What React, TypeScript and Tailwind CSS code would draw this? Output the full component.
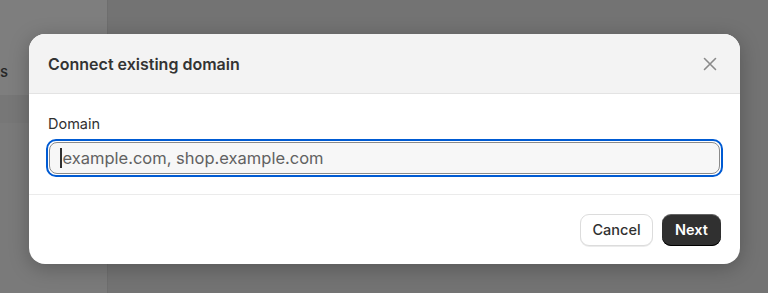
import React from 'react';

const App: React.FC = () => {
  return (
    <div
      className="relative h-[293px] w-full overflow-hidden bg-[#737373]"
      style={{ fontFamily: 'Inter, "Liberation Sans", sans-serif' }}
    >
      {/* Dimmed page behind */}
      <div className="flex h-full">
        <div className="flex w-[108px] flex-col border-r border-[#6e6e6e] bg-[#7e7e7e]">
          <div className="h-[95px] pt-[62px]">
            <div className="flex w-[8px] justify-end overflow-hidden text-[15px] font-medium leading-[20px] text-[#262626]">
              <span className="whitespace-nowrap">Domain s</span>
            </div>
          </div>
          <div className="h-[28px] bg-[#777777]" />
          <div className="flex-1 bg-[#7a7a7a]" />
        </div>
        <div className="flex-1 bg-[#737373]" />
      </div>

      {/* Modal */}
      <div className="absolute left-[29px] top-[34px] w-[711px] overflow-hidden rounded-[16px] bg-white shadow-[0_4px_20px_rgba(0,0,0,0.25)]">
        <div className="flex h-[60px] items-center justify-between border-b border-[#e3e3e3] bg-[#f3f3f3] pl-[19px] pr-[22px]">
          <h2 className="text-[16px] font-semibold text-[#333333]">Connect existing domain</h2>
          <button className="flex h-[16px] w-[16px] items-center justify-center text-[#8a8a8a]">
            <svg width="14" height="14" viewBox="0 0 14 14" fill="none" stroke="currentColor" strokeWidth="1.6" strokeLinecap="round">
              <path d="M1.5 1.5l11 11M12.5 1.5l-11 11" />
            </svg>
          </button>
        </div>

        <div className="border-b border-[#ebebeb] px-[19px] pb-[17px] pt-[20px]">
          <label className="mb-[5px] block text-[14.5px] leading-[20px] text-[#303030]">Domain</label>
          <div className="mx-[-2px] rounded-[10px] border-2 border-[#005bd3] p-[1px]">
            <div className="flex h-[32px] items-center rounded-[8px] border border-[#8a8a8a] bg-[#f7f7f7] pl-[10px] pr-[12px] text-[16.5px] text-[#616161]">
              <span className="mr-[1px] h-[20px] w-[1.5px] bg-[#303030]" />
              <span>example.com, shop.example.com</span>
            </div>
          </div>
        </div>

        <div className="flex h-[69px] items-center justify-end gap-[9px] px-[19px]">
          <button className="h-[32px] w-[73px] rounded-[9px] border border-[#dcdcdc] bg-white text-[14.5px] font-medium text-[#303030] shadow-[0_1px_0_rgba(0,0,0,0.08)]">
            Cancel
          </button>
          <button className="h-[32px] w-[59px] rounded-[9px] bg-[#303030] text-[14.5px] font-semibold text-white shadow-[inset_0_-1px_0_#000,inset_0_1px_0_rgba(255,255,255,0.25)]">
            Next
          </button>
        </div>
      </div>
    </div>
  );
};

export default App;
